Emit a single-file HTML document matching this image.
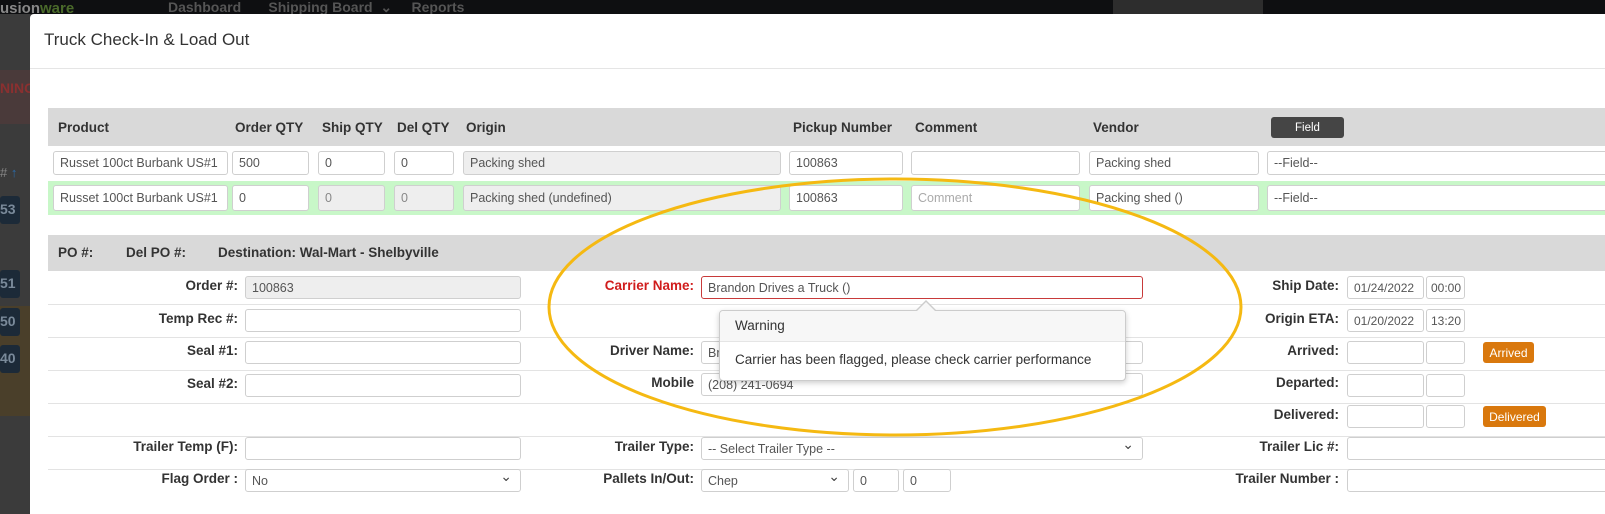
<!DOCTYPE html>
<html><head><meta charset="utf-8"><style>
*{box-sizing:border-box;margin:0;padding:0}
body{width:1605px;height:501px;overflow:hidden;background:#3b3b3b;font-family:"Liberation Sans",sans-serif;position:relative;font-size:13px;color:#333}
.a{position:absolute}
.in{position:absolute;background:#fff;border:1px solid #cfcfcf;border-radius:3px;font-size:12.5px;color:#555;padding-left:6px;display:flex;align-items:center;white-space:nowrap;overflow:hidden}
.ro{background:#eee}
.lb{position:absolute;font-weight:bold;font-size:13.5px;line-height:16px;color:#333;text-align:right;white-space:nowrap}
.th{position:absolute;font-weight:bold;font-size:13.5px;line-height:16px;color:#333;top:120px}
.hl{position:absolute;left:48px;right:0;height:1px;background:#e3e3e3}
.sel::after{content:"⌄";position:absolute;right:8px;top:-2px;font-size:14px;color:#444}
.btn{position:absolute;background:#d9780d;color:#fff;font-size:12px;border-radius:3px;display:flex;align-items:center;justify-content:center}
</style></head><body>
<div class="a" style="left:0;top:0;width:1605px;height:14px;background:#0e0f11"></div>
<div class="a" style="left:0;top:0;font-size:15px;color:#888;font-weight:bold">usion<span style="color:#4a6a2a">ware</span></div>
<div class="a" style="left:168px;top:-1px;color:#555;font-weight:bold;font-size:14px">Dashboard &nbsp;&nbsp;&nbsp;&nbsp;&nbsp; Shipping Board &nbsp;⌄ &nbsp;&nbsp;&nbsp; Reports</div>
<div class="a" style="left:1113px;top:0;width:150px;height:14px;background:#2d2d2d"></div>
<div class="a" style="left:0;top:70px;width:30px;height:54px;background:#4a3a3a"></div>
<div class="a" style="left:0;top:80px;color:#8a3030;font-weight:bold;font-size:14px">NINC</div>
<div class="a" style="left:0;top:165px;color:#888;font-size:13px">#<span style="color:#2a6aa8"> ↑</span></div>
<div class="a" style="left:0;top:196px;width:20px;height:28px;background:#1c2a38;border-radius:3px;color:#7a8a9a;font-weight:bold;font-size:14px;padding-top:5px">53</div>
<div class="a" style="left:0;top:270px;width:20px;height:28px;background:#1c2a38;border-radius:3px;color:#7a8a9a;font-weight:bold;font-size:14px;padding-top:5px">51</div>
<div class="a" style="left:0;top:306px;width:30px;height:110px;background:#4a3f2a"></div>
<div class="a" style="left:0;top:308px;width:20px;height:28px;background:#1c2a38;border-radius:3px;color:#7a8a9a;font-weight:bold;font-size:14px;padding-top:5px">50</div>
<div class="a" style="left:0;top:345px;width:20px;height:28px;background:#1c2a38;border-radius:3px;color:#7a8a9a;font-weight:bold;font-size:14px;padding-top:5px">40</div>

<div class="a" style="left:30px;top:14px;width:1580px;height:500px;background:#fff;border-radius:4px 0 0 0"></div>
<div class="a" style="left:44px;top:30px;font-size:17px;color:#333">Truck Check-In &amp; Load Out</div>
<div class="a" style="left:30px;top:68px;width:1575px;height:1px;background:#e5e5e5"></div>

<div class="a" style="left:48px;top:108px;width:1557px;height:38px;background:#d9d9d9"></div>
<div class="th" style="left:58px">Product</div>
<div class="th" style="left:235px">Order QTY</div>
<div class="th" style="left:322px">Ship QTY</div>
<div class="th" style="left:397px">Del QTY</div>
<div class="th" style="left:466px">Origin</div>
<div class="th" style="left:793px">Pickup Number</div>
<div class="th" style="left:915px">Comment</div>
<div class="th" style="left:1093px">Vendor</div>
<div class="a" style="left:1271px;top:117px;width:73px;height:21px;background:#454545;border-radius:3px;color:#fff;font-size:11.5px;display:flex;align-items:center;justify-content:center">Field</div>

<div class="in" style="left:53px;top:151px;width:175px;height:24px">Russet 100ct Burbank US#1</div>
<div class="in" style="left:232px;top:151px;width:77px;height:24px">500</div>
<div class="in" style="left:318px;top:151px;width:67px;height:24px">0</div>
<div class="in" style="left:394px;top:151px;width:60px;height:24px">0</div>
<div class="in ro" style="left:463px;top:151px;width:318px;height:24px">Packing shed</div>
<div class="in" style="left:789px;top:151px;width:114px;height:24px">100863</div>
<div class="in" style="left:911px;top:151px;width:169px;height:24px"></div>
<div class="in" style="left:1089px;top:151px;width:170px;height:24px">Packing shed</div>
<div class="in" style="left:1267px;top:151px;width:360px;height:24px">--Field--</div>

<div class="a" style="left:48px;top:181px;width:1557px;height:34px;background:#c8f7c8"></div>
<div class="in" style="left:53px;top:185px;width:175px;height:26px">Russet 100ct Burbank US#1</div>
<div class="in" style="left:232px;top:185px;width:77px;height:26px">0</div>
<div class="in ro" style="left:318px;top:185px;width:67px;height:26px;color:#888">0</div>
<div class="in ro" style="left:394px;top:185px;width:60px;height:26px;color:#888">0</div>
<div class="in ro" style="left:463px;top:185px;width:318px;height:26px">Packing shed (undefined)</div>
<div class="in" style="left:789px;top:185px;width:114px;height:26px">100863</div>
<div class="in" style="left:911px;top:185px;width:169px;height:26px;color:#aaa">Comment</div>
<div class="in" style="left:1089px;top:185px;width:170px;height:26px">Packing shed ()</div>
<div class="in" style="left:1267px;top:185px;width:360px;height:26px">--Field--</div>

<div class="a" style="left:48px;top:235px;width:1557px;height:36px;background:#d9d9d9"></div>
<div class="a" style="left:58px;top:245px;font-weight:bold;font-size:13.5px">PO #:</div>
<div class="a" style="left:126px;top:245px;font-weight:bold;font-size:13.5px">Del PO #:</div>
<div class="a" style="left:218px;top:245px;font-weight:bold;font-size:13.5px">Destination: Wal-Mart - Shelbyville</div>

<div class="hl" style="top:304px"></div><div class="hl" style="top:337px"></div><div class="hl" style="top:370px"></div>
<div class="hl" style="top:403px"></div><div class="hl" style="top:436px"></div><div class="hl" style="top:469px"></div>

<div class="lb" style="right:1367px;top:278px">Order #:</div>
<div class="lb" style="right:1367px;top:311px">Temp Rec #:</div>
<div class="lb" style="right:1367px;top:343px">Seal #1:</div>
<div class="lb" style="right:1367px;top:376px">Seal #2:</div>
<div class="lb" style="right:1367px;top:439px">Trailer Temp (F):</div>
<div class="lb" style="right:1367px;top:471px">Flag Order :</div>
<div class="in ro" style="left:245px;top:276px;width:276px;height:23px">100863</div>
<div class="in" style="left:245px;top:309px;width:276px;height:23px"></div>
<div class="in" style="left:245px;top:341px;width:276px;height:23px"></div>
<div class="in" style="left:245px;top:374px;width:276px;height:23px"></div>
<div class="in" style="left:245px;top:437px;width:276px;height:23px"></div>
<div class="in sel" style="left:245px;top:469px;width:276px;height:23px">No</div>

<div class="lb" style="right:911px;top:278px;color:#d01c1c">Carrier Name:</div>
<div class="lb" style="right:911px;top:343px">Driver Name:</div>
<div class="lb" style="right:911px;top:375px">Mobile</div>
<div class="lb" style="right:911px;top:439px">Trailer Type:</div>
<div class="lb" style="right:911px;top:471px">Pallets In/Out:</div>
<div class="in" style="left:701px;top:276px;width:442px;height:23px;border-color:#c83a3a">Brandon Drives a Truck ()</div>
<div class="in" style="left:701px;top:341px;width:442px;height:23px">Br</div>
<div class="in" style="left:701px;top:373px;width:442px;height:23px">(208) 241-0694</div>
<div class="in sel" style="left:701px;top:437px;width:442px;height:23px">-- Select Trailer Type --</div>
<div class="in sel" style="left:701px;top:469px;width:148px;height:23px">Chep</div>
<div class="in" style="left:853px;top:469px;width:46px;height:23px">0</div>
<div class="in" style="left:903px;top:469px;width:48px;height:23px">0</div>

<div class="lb" style="right:266px;top:278px">Ship Date:</div>
<div class="lb" style="right:266px;top:311px">Origin ETA:</div>
<div class="lb" style="right:266px;top:343px">Arrived:</div>
<div class="lb" style="right:266px;top:375px">Departed:</div>
<div class="lb" style="right:266px;top:407px">Delivered:</div>
<div class="lb" style="right:266px;top:439px">Trailer Lic #:</div>
<div class="lb" style="right:266px;top:471px">Trailer Number :</div>
<div class="in" style="left:1347px;top:276px;width:77px;height:23px;font-size:12px">01/24/2022</div>
<div class="in" style="left:1426px;top:276px;width:39px;height:23px;font-size:12px;padding-left:4px">00:00</div>
<div class="in" style="left:1347px;top:309px;width:77px;height:23px;font-size:12px">01/20/2022</div>
<div class="in" style="left:1426px;top:309px;width:39px;height:23px;font-size:12px;padding-left:4px">13:20</div>
<div class="in" style="left:1347px;top:341px;width:77px;height:23px"></div>
<div class="in" style="left:1426px;top:341px;width:39px;height:23px"></div>
<div class="in" style="left:1347px;top:374px;width:77px;height:23px"></div>
<div class="in" style="left:1426px;top:374px;width:39px;height:23px"></div>
<div class="in" style="left:1347px;top:405px;width:77px;height:23px"></div>
<div class="in" style="left:1426px;top:405px;width:39px;height:23px"></div>
<div class="in" style="left:1347px;top:437px;width:270px;height:23px"></div>
<div class="in" style="left:1347px;top:469px;width:270px;height:23px"></div>
<div class="btn" style="left:1483px;top:342px;width:51px;height:21px">Arrived</div>
<div class="btn" style="left:1483px;top:406px;width:63px;height:21px">Delivered</div>

<div class="a" style="left:719px;top:310px;width:407px;height:71px;background:#fff;border:1px solid #ccc;border-radius:4px;box-shadow:0 2px 6px rgba(0,0,0,.2)"></div>
<div class="a" style="left:720px;top:311px;width:405px;height:31px;background:#f7f7f7;border-bottom:1px solid #e5e5e5;border-radius:4px 4px 0 0;padding:7px 0 0 15px;font-size:13.5px">Warning</div>
<div class="a" style="left:735px;top:352px;font-size:13.5px;color:#333">Carrier has been flagged, please check carrier performance</div>
<div class="a" style="left:916px;top:300px;width:0;height:0;border-left:10px solid transparent;border-right:10px solid transparent;border-bottom:10px solid #ccc"></div>
<div class="a" style="left:917px;top:302px;width:0;height:0;border-left:9px solid transparent;border-right:9px solid transparent;border-bottom:9px solid #f7f7f7"></div>

<svg class="a" style="left:0;top:0" width="1605" height="501"><ellipse cx="895" cy="307" rx="346" ry="128" fill="none" stroke="#f5b912" stroke-width="3"/></svg>
</body></html>
